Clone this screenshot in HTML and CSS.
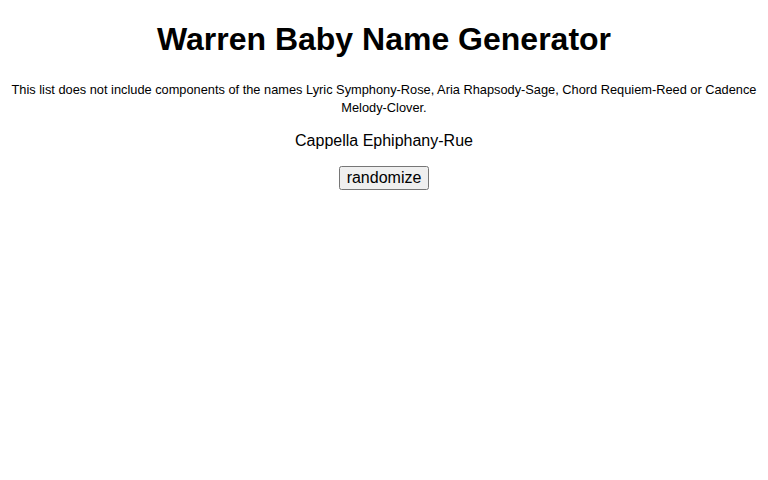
FILE: index.html
```html
<!DOCTYPE html>
<html lang="en">
<head>
    <meta charset="UTF-8">
    <title>Warren Baby Name Generator</title>
    <link rel="stylesheet" href="styles.css">
</head>
<body>
    <div class="page_box">
        <h1 class="title">Warren Baby Name Generator</h1>
        <p class="note">This list does not include components of the names Lyric Symphony-Rose, Aria Rhapsody-Sage, Chord Requiem-Reed or Cadence Melody-Clover.</p>
        <p class="result">Cappella Ephiphany-Rue</p>
        <button class="rand_btn">randomize</button>
    </div>
</body>
</html>
```

FILE: styles.css
```css
body {
    margin: 8px;
    font-family: "Liberation Sans", Arial, sans-serif;
    color: #000;
    background-color: #fff;
}
.page_box {
    display: flex;
    flex-direction: column;
    align-items: center;
    text-align: center;
}
.title {
    font-size: 32px;
    font-weight: bold;
    margin: 13px 0 23px;
}
.note {
    font-size: 12.8px;
    line-height: 18px;
    margin: 0;
}
.result {
    font-size: 16px;
    margin: 15px 0 16px;
}
.rand_btn {
    font-family: "Liberation Sans", Arial, sans-serif;
    font-size: 16px;
    padding: 1px 6px;
}
```
